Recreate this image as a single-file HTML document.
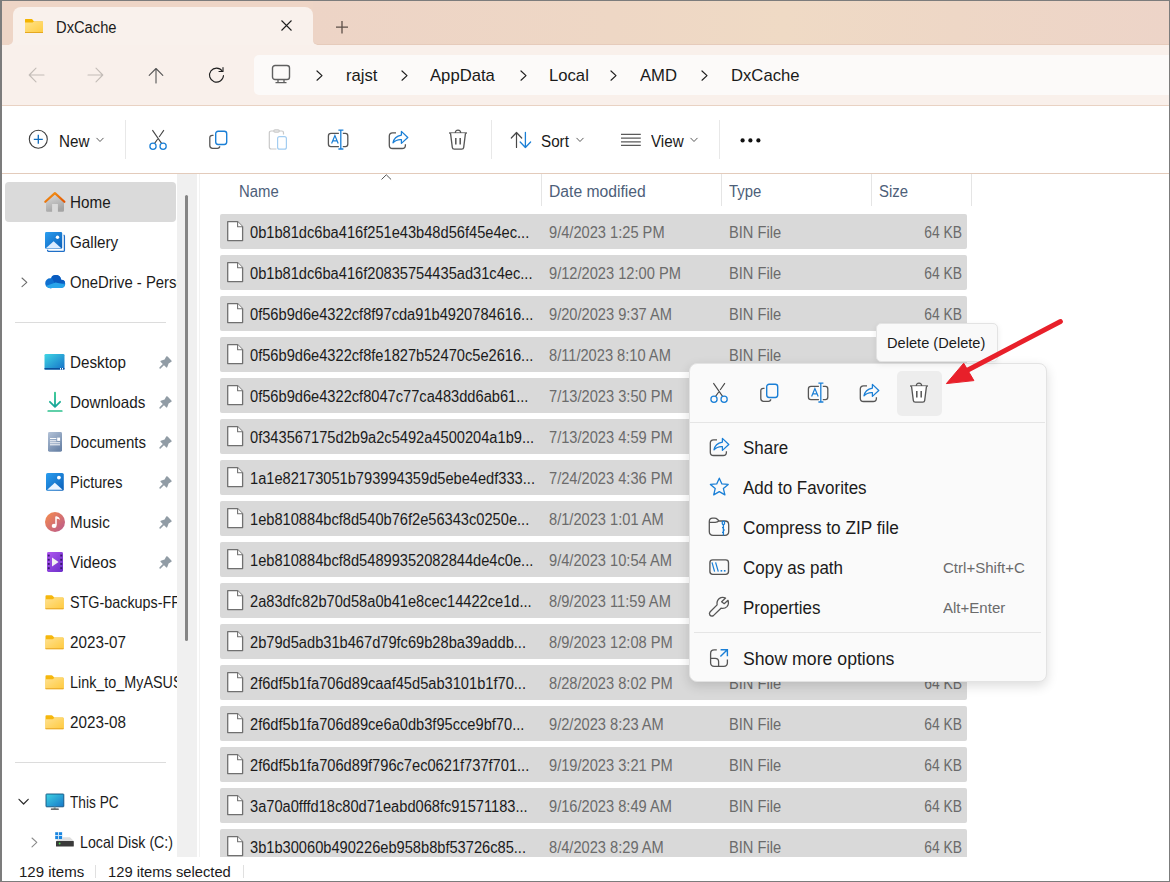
<!DOCTYPE html>
<html><head><meta charset="utf-8">
<style>
*{margin:0;padding:0;box-sizing:border-box}
html,body{width:1170px;height:882px;overflow:hidden;background:#fff}
body{position:relative;font-family:"Liberation Sans",sans-serif;color:#1a1a1a}
.a{position:absolute}
.t{position:absolute;white-space:nowrap;line-height:1;transform-origin:0 0}
svg{position:absolute;overflow:visible}
.row{left:220px;width:747px;background:#d9d9d9;border-radius:2px}
.fn{font-size:16px;color:#1b1b1b;transform:scaleX(0.915)}
.gr{font-size:16px;color:#6b6b6b;transform:scaleX(0.915)}
.grr{font-size:16px;color:#6b6b6b;transform:scaleX(0.865);transform-origin:100% 0}
.nav{font-size:16.5px;color:#1b1b1b;transform:scaleX(0.923)}
.hd{font-size:16px;color:#4d6079;transform:scaleX(0.93)}
.cm{font-size:17.5px;color:#1b1b1b;transform:scaleX(0.97)}
.ic{fill:none;stroke-linecap:round;stroke-linejoin:round}
</style></head><body>
<!-- ============ TAB BAR ============ -->
<div class="a" style="left:0;top:0;width:1170px;height:50px;background:#f9f0eb"></div>
<div class="a" style="left:0;top:0;width:1170px;height:45px;background:#eed5c6;border-radius:0 0 0 0"></div>
<div class="a" style="left:9px;top:30px;width:308px;height:16px;background:#f9f1ec"></div>
<div class="a" style="left:0;top:0;width:13px;height:45px;background:#eed5c6;border-radius:0 0 5px 0"></div>
<div class="a" style="left:313px;top:0;width:857px;height:45px;background:linear-gradient(90deg,#edd4c6 0%,#eed7c5 35%,#efdac5 55%,#eed7c6 75%,#edd4c8 100%);border-radius:0 0 0 5px;border-bottom:1px solid #e6cbbb"></div>
<div class="a" style="left:13px;top:7px;width:300px;height:39px;background:#f9f1ec;border-radius:8px 8px 0 0"></div>
<svg width="20" height="16" style="left:24px;top:18px" viewBox="0 0 20 16">
 <defs><linearGradient id="fg" x1="0" y1="0" x2="1" y2="1"><stop offset="0" stop-color="#ffe28a"/><stop offset="1" stop-color="#ffcc40"/></linearGradient></defs>
 <path d="M1.5 1 H8 L10 3.5 H18.5 Q19 3.5 19 4 V14.5 H1 V1.5 Q1 1 1.5 1Z" fill="#f4b400"/>
 <path d="M1 4.5 H8.5 L10 3.5 H19 V14.5 Q19 15 18.5 15 H1.5 Q1 15 1 14.5Z" fill="url(#fg)"/>
 <rect x="1" y="14" width="18" height="1" fill="#e5a820"/>
</svg>
<div class="t" style="left:56px;top:20px;font-size:16px;color:#1b1b1b;transform:scaleX(0.92)">DxCache</div>
<svg width="12" height="12" style="left:281px;top:20px" viewBox="0 0 12 12"><path d="M0.5 0.5 L10.5 10.5 M10.5 0.5 L0.5 10.5" stroke="#1f1f1f" stroke-width="1.1"/></svg>
<svg width="13" height="13" style="left:336px;top:21px" viewBox="0 0 13 13"><path d="M6 0 V12.5 M0 6.2 H12" stroke="#5c4f48" stroke-width="1.3"/></svg>

<!-- ============ NAV BAR ============ -->
<div class="a" style="left:0;top:45px;width:1170px;height:61px;background:#f9f0eb;border-bottom:1px solid #e9d2c3"></div>
<svg width="16" height="16" style="left:28px;top:67px" viewBox="0 0 16 16"><path class="ic" d="M1.5 8 H16 M8 1.2 L1.2 8 L8 14.8" stroke="#c3bcb7" stroke-width="1.1"/></svg>
<svg width="16" height="16" style="left:88px;top:67px" viewBox="0 0 16 16"><path class="ic" d="M0 8 H14.5 M8 1.2 L14.8 8 L8 14.8" stroke="#c3bcb7" stroke-width="1.1"/></svg>
<svg width="16" height="16" style="left:148px;top:67px" viewBox="0 0 16 16"><path class="ic" d="M8 1.5 V16 M1.2 8.3 L8 1.5 L14.8 8.3" stroke="#555" stroke-width="1.1"/></svg>
<svg width="17" height="17" style="left:208px;top:66px" viewBox="0 0 17 17"><path class="ic" d="M14.2 5 A7 7 0 1 0 15.5 9.5" stroke="#1f1f1f" stroke-width="1.1"/><path class="ic" d="M15 1.5 V5.5 H11" stroke="#1f1f1f" stroke-width="1.1"/></svg>
<div class="a" style="left:254px;top:55px;width:930px;height:40px;background:#fcfaf9;border-radius:5px"></div>
<svg width="20" height="20" style="left:271px;top:64px" viewBox="0 0 20 20"><rect x="1.5" y="1.5" width="17" height="14" rx="2.6" fill="none" stroke="#5f5f5f" stroke-width="1.4"/><path d="M7 15.5 V18 M13 15.5 V18 M4.5 18.6 H15.5" stroke="#5f5f5f" stroke-width="1.3" fill="none"/></svg>
<svg width="8" height="12" style="left:316px;top:70px" viewBox="0 0 8 12"><path class="ic" d="M1 1 L6 5.6 L1 10.2" stroke="#1f1f1f" stroke-width="1.2"/></svg>
<div class="t" style="left:346px;top:67px;font-size:17px;transform:scaleX(0.98)">rajst</div>
<svg width="8" height="12" style="left:401px;top:70px" viewBox="0 0 8 12"><path class="ic" d="M1 1 L6 5.6 L1 10.2" stroke="#1f1f1f" stroke-width="1.2"/></svg>
<div class="t" style="left:430px;top:67px;font-size:17px;transform:scaleX(0.98)">AppData</div>
<svg width="8" height="12" style="left:520px;top:70px" viewBox="0 0 8 12"><path class="ic" d="M1 1 L6 5.6 L1 10.2" stroke="#1f1f1f" stroke-width="1.2"/></svg>
<div class="t" style="left:549px;top:67px;font-size:17px;transform:scaleX(0.98)">Local</div>
<svg width="8" height="12" style="left:610px;top:70px" viewBox="0 0 8 12"><path class="ic" d="M1 1 L6 5.6 L1 10.2" stroke="#1f1f1f" stroke-width="1.2"/></svg>
<div class="t" style="left:640px;top:67px;font-size:17px;transform:scaleX(0.98)">AMD</div>
<svg width="8" height="12" style="left:701px;top:70px" viewBox="0 0 8 12"><path class="ic" d="M1 1 L6 5.6 L1 10.2" stroke="#1f1f1f" stroke-width="1.2"/></svg>
<div class="t" style="left:731px;top:67px;font-size:17px;transform:scaleX(0.98)">DxCache</div>

<!-- ============ RIBBON ============ -->
<div class="a" style="left:0;top:106px;width:1170px;height:68px;background:#fff;border-bottom:1px solid #e3cbbb"></div>
<svg width="20" height="20" style="left:28px;top:129px" viewBox="0 0 20 20"><circle cx="10.3" cy="10.3" r="9" fill="none" stroke="#3d3d3d" stroke-width="1.1"/><path d="M10.3 5.8 V14.8 M5.8 10.3 H14.8" stroke="#0f6cbd" stroke-width="1.3"/></svg>
<div class="t" style="left:59px;top:134px;font-size:16px;transform:scaleX(0.95)">New</div>
<svg width="9" height="6" style="left:96px;top:137px" viewBox="0 0 9 6"><path class="ic" d="M0.8 1.2 L4 4.5 L7.2 1.2" stroke="#5a5a5a" stroke-width="1"/></svg>
<div class="a" style="left:125px;top:120px;width:1px;height:39px;background:#e8e8e8"></div>
<!-- cut -->
<svg id="cut" width="20" height="22" style="left:148px;top:129px" viewBox="0 0 20 22">
 <path d="M4.4 1.1 L13.6 14.4 M15.9 1.1 L11.1 8 M9.7 10 L6.6 14.4" stroke="#474747" stroke-width="1.1" fill="none"/>
 <circle cx="5" cy="17.3" r="3.1" fill="none" stroke="#1a7fd6" stroke-width="1.25"/><circle cx="15.1" cy="17.3" r="3.1" fill="none" stroke="#1a7fd6" stroke-width="1.25"/>
</svg>
<!-- copy -->
<svg width="20" height="20" style="left:209px;top:130px" viewBox="0 0 20 20">
 <path d="M4.5 5.3 H3.3 Q0.8 5.3 0.8 7.8 V15.5 Q0.8 18.3 3.6 18.3 H8.4 Q10.7 18.3 10.7 16.2" fill="none" stroke="#555" stroke-width="1.3"/>
 <rect x="6.7" y="1.3" width="11" height="13.2" rx="2.4" fill="none" stroke="#1a7fd6" stroke-width="1.4"/>
</svg>
<!-- paste disabled -->
<svg width="20" height="21" style="left:268px;top:129px" viewBox="0 0 20 21">
 <path d="M8.5 20 H3.3 Q1.3 20 1.3 18 V3.8 Q1.3 2 3.3 2 H13.8 Q15.5 2 15.5 3.8 V5.5" fill="none" stroke="#c9c9c9" stroke-width="1.2"/>
 <rect x="5.8" y="0.8" width="5.5" height="2.4" rx="1.2" fill="none" stroke="#c9c9c9" stroke-width="1.1"/>
 <rect x="9.6" y="7.6" width="8.8" height="12.6" rx="2" fill="none" stroke="#a3cdf1" stroke-width="1.2"/>
</svg>
<!-- rename -->
<svg width="22" height="21" style="left:327px;top:129px" viewBox="0 0 22 21">
 <path d="M11.9 4.4 H4 Q1.4 4.4 1.4 7 V15 Q1.4 17.6 4 17.6 H11.9 M15.8 4.4 H18.4 Q20.8 4.4 20.8 7 V15 Q20.8 17.6 18.4 17.6 H15.8" fill="none" stroke="#555" stroke-width="1.3"/>
 <path d="M13.8 1.2 V20 M11.4 1.2 H16.4 M11.4 20 H16.4" stroke="#1a7fd6" stroke-width="1.3" fill="none"/>
 <path d="M4.6 14.6 L7.9 6.6 L11.2 14.6 M5.8 11.8 H10" stroke="#1a7fd6" stroke-width="1.2" fill="none"/>
</svg>
<!-- share -->
<svg width="30" height="30" style="left:383px;top:125px" viewBox="0 0 30 30">
 <path d="M13 7.8 H9.6 Q6.3 7.8 6.3 11.1 V20.2 Q6.3 23.5 9.6 23.5 H19.1 Q22.4 23.5 22.4 20.2 V19.2" fill="none" stroke="#555" stroke-width="1.3"/>
 <path d="M10 17.9 Q11 11.4 18.4 10.1 V6.4 L24.8 12.5 L18.4 18.4 V14.6 Q13.2 14.2 10 17.9 Z" fill="none" stroke="#1a7fd6" stroke-width="1.25" stroke-linejoin="round"/>
</svg>
<!-- delete -->
<svg width="20" height="21" style="left:448px;top:129px" viewBox="0 0 20 21">
 <path d="M1 4 H19" stroke="#555" stroke-width="1.3"/>
 <path d="M7.3 4 Q7.3 1.1 10 1.1 Q12.7 1.1 12.7 4" fill="none" stroke="#555" stroke-width="1.2"/>
 <path d="M2.5 4.2 L4.3 18.4 Q4.5 20.2 6.3 20.2 H13.7 Q15.5 20.2 15.7 18.4 L17.5 4.2" fill="#fff" stroke="#555" stroke-width="1.3"/>
 <path d="M7.8 9 V15.5 M12.2 9 V15.5" stroke="#555" stroke-width="1.5"/>
</svg>
<div class="a" style="left:491px;top:120px;width:1px;height:39px;background:#e8e8e8"></div>
<!-- sort -->
<svg width="22" height="18" style="left:510px;top:131px" viewBox="0 0 22 18">
 <path class="ic" d="M6.5 1.5 V16.5 M1.3 7 L6.5 1.5 L11.7 7" stroke="#474747" stroke-width="1.2"/>
 <path class="ic" d="M15.4 1.5 V16.5 M10.2 11 L15.4 16.5 L20.6 11" stroke="#1a7fd6" stroke-width="1.3"/>
</svg>
<div class="t" style="left:541px;top:134px;font-size:16px;transform:scaleX(0.95)">Sort</div>
<svg width="9" height="6" style="left:576px;top:137px" viewBox="0 0 9 6"><path class="ic" d="M0.8 1.2 L4 4.5 L7.2 1.2" stroke="#5a5a5a" stroke-width="1"/></svg>
<!-- view -->
<svg width="22" height="14" style="left:620px;top:133px" viewBox="0 0 22 14">
 <path d="M1 1.4 H20.8 M1 5.1 H20.8 M1 8.8 H20.8 M1 12.4 H20.8" stroke="#5a5a5a" stroke-width="1.2"/>
</svg>
<div class="t" style="left:651px;top:134px;font-size:16px;transform:scaleX(0.95)">View</div>
<svg width="9" height="6" style="left:690px;top:137px" viewBox="0 0 9 6"><path class="ic" d="M0.8 1.2 L4 4.5 L7.2 1.2" stroke="#5a5a5a" stroke-width="1"/></svg>
<div class="a" style="left:719px;top:120px;width:1px;height:39px;background:#e8e8e8"></div>
<svg width="20" height="6" style="left:740px;top:137px" viewBox="0 0 20 6"><circle cx="2.6" cy="3.4" r="2.1" fill="#111"/><circle cx="10.4" cy="3.4" r="2.1" fill="#111"/><circle cx="18.4" cy="3.4" r="2.1" fill="#111"/></svg>

<!-- ============ NAV PANE ============ -->
<div class="a" style="left:177px;top:174px;width:20px;height:683px;background:#f0f0f0"></div>
<div class="a" style="left:185px;top:195px;width:3px;height:446px;background:#858585;border-radius:2px"></div>
<div class="a" style="left:199px;top:174px;width:1px;height:683px;background:#f2f2f2"></div>
<div class="a" style="left:5px;top:182px;width:171px;height:40px;background:#dadada;border-radius:4px"></div>
<div class="a" style="left:15px;top:322px;width:151px;height:1px;background:#dcdcdc"></div>
<div class="a" style="left:15px;top:762px;width:151px;height:1px;background:#dcdcdc"></div>
<svg width="0" height="0" style="left:0;top:0"><defs>
<linearGradient id="fgn" x1="0" y1="0" x2="1" y2="1"><stop offset="0" stop-color="#ffe190"/><stop offset="1" stop-color="#ffca3e"/></linearGradient>
<linearGradient id="hb" x1="0" y1="0" x2="0.4" y2="1"><stop offset="0" stop-color="#dcdcdc"/><stop offset="1" stop-color="#a4a4a4"/></linearGradient><linearGradient id="roof" x1="0" y1="0" x2="1" y2="1"><stop offset="0" stop-color="#f39a1a"/><stop offset="1" stop-color="#e35400"/></linearGradient>
<linearGradient id="dsk" x1="0" y1="0" x2="1" y2="1"><stop offset="0" stop-color="#40d6e4"/><stop offset="1" stop-color="#1470c8"/></linearGradient>
<linearGradient id="doc" x1="0" y1="0" x2="0.6" y2="1"><stop offset="0" stop-color="#b4c3d8"/><stop offset="1" stop-color="#6c85a8"/></linearGradient>
<linearGradient id="pic" x1="0" y1="0" x2="1" y2="1"><stop offset="0" stop-color="#2b9ef0"/><stop offset="1" stop-color="#0b5fb8"/></linearGradient>
<linearGradient id="mus" x1="0" y1="0" x2="1" y2="1"><stop offset="0" stop-color="#f78e4c"/><stop offset="1" stop-color="#b8578f"/></linearGradient>
<linearGradient id="vid" x1="0" y1="0" x2="1" y2="1"><stop offset="0" stop-color="#b058f0"/><stop offset="1" stop-color="#6a2ec8"/></linearGradient>
<linearGradient id="pc" x1="0" y1="0" x2="1" y2="1"><stop offset="0" stop-color="#3fd3e3"/><stop offset="1" stop-color="#1676c8"/></linearGradient>
<linearGradient id="od" x1="0" y1="0" x2="0" y2="1"><stop offset="0" stop-color="#0a63c9"/><stop offset="1" stop-color="#1d8fe8"/></linearGradient>
<linearGradient id="dl" x1="0" y1="0" x2="0" y2="15" gradientUnits="userSpaceOnUse"><stop offset="0" stop-color="#2cc78c"/><stop offset="1" stop-color="#16a39a"/></linearGradient>
</defs></svg>
<!-- home -->
<svg width="22" height="21" style="left:44px;top:192px" viewBox="0 0 22 21">
 <path d="M2 10 L10.9 2.5 L20 10 V18.5 Q20 19.7 18.8 19.7 H13.9 V11.9 H8.1 V19.7 H3.2 Q2 19.7 2 18.5 Z" fill="url(#hb)"/>
 <path d="M1.3 9.8 L10.9 1.1 L20.4 9.8" fill="none" stroke="url(#roof)" stroke-width="2.2" stroke-linecap="round" stroke-linejoin="round"/>
</svg>
<!-- gallery -->
<svg width="21" height="21" style="left:45px;top:232px" viewBox="0 0 21 21">
 <path d="M2.6 17.8 V18.6 Q2.6 19.4 3.4 19.4 H18.4 Q19.4 19.4 19.4 18.4 V4.2 Q19.4 3.4 18.6 3.2" fill="none" stroke="#1f6fc8" stroke-width="1.3"/>
 <rect x="0" y="0" width="17.2" height="17" rx="1.4" fill="url(#pic)"/>
 <path d="M0.6 16.6 L8.6 9.2 L16.6 16.6Z" fill="#dcecff"/>
 <circle cx="12.5" cy="5.2" r="1.7" fill="#fff"/>
</svg>
<!-- onedrive -->
<svg width="8" height="12" style="left:21px;top:277px" viewBox="0 0 8 12"><path class="ic" d="M1 1 L5.8 5.3 L1 9.6" stroke="#6b6b6b" stroke-width="1.1"/></svg>
<svg width="21" height="14" style="left:45px;top:275px" viewBox="0 0 21 14">
 <defs><clipPath id="cld"><circle cx="5.2" cy="8.3" r="5"/><circle cx="10.8" cy="5.5" r="5.4"/><circle cx="16.2" cy="8.8" r="4"/><rect x="4" y="8" width="12.5" height="5"/></clipPath></defs>
 <g clip-path="url(#cld)">
  <rect x="0" y="0" width="21" height="14" fill="#0f70d0"/>
  <path d="M6 0 H21 V7.2 L10 9 L7.5 4 Z" fill="#0a5bbf"/>
  <path d="M0 11.3 L10.6 7.4 L21 9.8 V14 H0Z" fill="#29a5ea"/>
 </g>
</svg>
<!-- desktop -->
<svg width="21" height="16" style="left:44px;top:354px" viewBox="0 0 21 16">
 <rect x="0.5" y="0" width="20" height="15.5" rx="1.3" fill="url(#dsk)"/>
 <rect x="0.5" y="14" width="20" height="1.6" fill="#0b4f9a"/>
 <rect x="16" y="14" width="1" height="1.6" fill="#fff"/><rect x="18" y="14" width="1" height="1.6" fill="#fff"/>
</svg>
<!-- downloads -->
<svg width="16" height="20" style="left:47px;top:392px" viewBox="0 0 16 20">
 <path d="M8 0.6 V14.6 M2.9 9.8 L8 14.9 L13.1 9.8" fill="none" stroke="url(#dl)" stroke-width="1.8" stroke-linecap="round" stroke-linejoin="round"/>
 <path d="M1.2 19 H14.8" stroke="#2bc08d" stroke-width="1.7" stroke-linecap="round"/>
</svg>
<!-- documents -->
<svg width="15" height="20" style="left:48px;top:432px" viewBox="0 0 15 20">
 <rect x="0" y="0" width="14" height="19.7" rx="1.4" fill="url(#doc)"/>
 <path d="M2 6.5 H8.3 M2 8.8 H8.3 M2 10.8 H12 M2 12.8 H12" stroke="#fff" stroke-width="0.95"/>
 <rect x="9.2" y="5.6" width="2.9" height="3.3" fill="#fff"/>
</svg>
<!-- pictures -->
<svg width="18" height="18" style="left:46px;top:473px" viewBox="0 0 18 18">
 <rect x="0" y="0" width="17.8" height="17.8" rx="1.6" fill="url(#pic)"/>
 <path d="M1.2 16.8 L8.8 9.8 L16.6 16.8Z" fill="#e9f3ff"/>
 <circle cx="12.9" cy="4.6" r="1.9" fill="#fff"/>
</svg>
<!-- music -->
<svg width="20" height="20" style="left:45px;top:512px" viewBox="0 0 20 20">
 <circle cx="10" cy="10" r="10" fill="url(#mus)"/>
 <path d="M11 4.4 V13.6" stroke="#fff" stroke-width="1.5"/>
 <path d="M11.2 4.2 Q14.8 4.8 14.8 7.9 Q13.4 6.6 11.2 6.9Z" fill="#fff"/>
 <ellipse cx="9.1" cy="13.9" rx="2.4" ry="2.1" fill="#fff"/>
</svg>
<!-- videos -->
<svg width="16" height="20" style="left:47px;top:552px" viewBox="0 0 16 20">
 <rect x="0" y="0" width="16" height="20" rx="1.4" fill="url(#vid)"/>
 <g fill="#3a1870"><rect x="0.8" y="2.6" width="1.9" height="1.9"/><rect x="0.8" y="6.8" width="1.9" height="1.9"/><rect x="0.8" y="11" width="1.9" height="1.9"/><rect x="0.8" y="15.2" width="1.9" height="1.9"/>
 <rect x="13.3" y="2.6" width="1.9" height="1.9"/><rect x="13.3" y="6.8" width="1.9" height="1.9"/><rect x="13.3" y="11" width="1.9" height="1.9"/><rect x="13.3" y="15.2" width="1.9" height="1.9"/></g>
 <path d="M5 5.6 L11.6 10 L5 14.4Z" fill="#f2f2f2"/>
</svg>
<svg width="14" height="14" style="left:159px;top:355px" viewBox="0 0 14 14"><path d="M7.2 1.6 Q7.9 0.9 8.6 1.6 L12.4 5.4 Q13.1 6.1 12.4 6.8 L9.6 8.4 L8.2 12.2 Q7.8 13 7.1 12.3 L1.7 6.9 Q1 6.2 1.8 5.8 L5.6 4.4 Z" fill="#919ca5"/><path d="M4.6 9.4 L1.1 12.9" stroke="#919ca5" stroke-width="1.5" stroke-linecap="round"/></svg><svg width="14" height="14" style="left:159px;top:395px" viewBox="0 0 14 14"><path d="M7.2 1.6 Q7.9 0.9 8.6 1.6 L12.4 5.4 Q13.1 6.1 12.4 6.8 L9.6 8.4 L8.2 12.2 Q7.8 13 7.1 12.3 L1.7 6.9 Q1 6.2 1.8 5.8 L5.6 4.4 Z" fill="#919ca5"/><path d="M4.6 9.4 L1.1 12.9" stroke="#919ca5" stroke-width="1.5" stroke-linecap="round"/></svg><svg width="14" height="14" style="left:159px;top:435px" viewBox="0 0 14 14"><path d="M7.2 1.6 Q7.9 0.9 8.6 1.6 L12.4 5.4 Q13.1 6.1 12.4 6.8 L9.6 8.4 L8.2 12.2 Q7.8 13 7.1 12.3 L1.7 6.9 Q1 6.2 1.8 5.8 L5.6 4.4 Z" fill="#919ca5"/><path d="M4.6 9.4 L1.1 12.9" stroke="#919ca5" stroke-width="1.5" stroke-linecap="round"/></svg><svg width="14" height="14" style="left:159px;top:475px" viewBox="0 0 14 14"><path d="M7.2 1.6 Q7.9 0.9 8.6 1.6 L12.4 5.4 Q13.1 6.1 12.4 6.8 L9.6 8.4 L8.2 12.2 Q7.8 13 7.1 12.3 L1.7 6.9 Q1 6.2 1.8 5.8 L5.6 4.4 Z" fill="#919ca5"/><path d="M4.6 9.4 L1.1 12.9" stroke="#919ca5" stroke-width="1.5" stroke-linecap="round"/></svg><svg width="14" height="14" style="left:159px;top:515px" viewBox="0 0 14 14"><path d="M7.2 1.6 Q7.9 0.9 8.6 1.6 L12.4 5.4 Q13.1 6.1 12.4 6.8 L9.6 8.4 L8.2 12.2 Q7.8 13 7.1 12.3 L1.7 6.9 Q1 6.2 1.8 5.8 L5.6 4.4 Z" fill="#919ca5"/><path d="M4.6 9.4 L1.1 12.9" stroke="#919ca5" stroke-width="1.5" stroke-linecap="round"/></svg><svg width="14" height="14" style="left:159px;top:555px" viewBox="0 0 14 14"><path d="M7.2 1.6 Q7.9 0.9 8.6 1.6 L12.4 5.4 Q13.1 6.1 12.4 6.8 L9.6 8.4 L8.2 12.2 Q7.8 13 7.1 12.3 L1.7 6.9 Q1 6.2 1.8 5.8 L5.6 4.4 Z" fill="#919ca5"/><path d="M4.6 9.4 L1.1 12.9" stroke="#919ca5" stroke-width="1.5" stroke-linecap="round"/></svg><svg width="19" height="15" style="left:45px;top:595px" viewBox="0 0 19 15">
 <path d="M0.5 1.2 Q0.5 0.3 1.4 0.3 H6.6 Q7.2 0.3 7.6 0.8 L9.2 2.6 H18 Q18.6 2.6 18.6 3.2 V13.8 H0.5Z" fill="#f5b70d"/>
 <path d="M0.5 4.3 H7.6 L9.4 2.9 H18.6 V13.6 Q18.6 14.2 18 14.2 H1.1 Q0.5 14.2 0.5 13.6Z" fill="url(#fgn)"/>
 <rect x="0.5" y="13.2" width="18.1" height="1" fill="#e9a92a"/>
</svg><svg width="19" height="15" style="left:45px;top:635px" viewBox="0 0 19 15">
 <path d="M0.5 1.2 Q0.5 0.3 1.4 0.3 H6.6 Q7.2 0.3 7.6 0.8 L9.2 2.6 H18 Q18.6 2.6 18.6 3.2 V13.8 H0.5Z" fill="#f5b70d"/>
 <path d="M0.5 4.3 H7.6 L9.4 2.9 H18.6 V13.6 Q18.6 14.2 18 14.2 H1.1 Q0.5 14.2 0.5 13.6Z" fill="url(#fgn)"/>
 <rect x="0.5" y="13.2" width="18.1" height="1" fill="#e9a92a"/>
</svg><svg width="19" height="15" style="left:45px;top:675px" viewBox="0 0 19 15">
 <path d="M0.5 1.2 Q0.5 0.3 1.4 0.3 H6.6 Q7.2 0.3 7.6 0.8 L9.2 2.6 H18 Q18.6 2.6 18.6 3.2 V13.8 H0.5Z" fill="#f5b70d"/>
 <path d="M0.5 4.3 H7.6 L9.4 2.9 H18.6 V13.6 Q18.6 14.2 18 14.2 H1.1 Q0.5 14.2 0.5 13.6Z" fill="url(#fgn)"/>
 <rect x="0.5" y="13.2" width="18.1" height="1" fill="#e9a92a"/>
</svg><svg width="19" height="15" style="left:45px;top:715px" viewBox="0 0 19 15">
 <path d="M0.5 1.2 Q0.5 0.3 1.4 0.3 H6.6 Q7.2 0.3 7.6 0.8 L9.2 2.6 H18 Q18.6 2.6 18.6 3.2 V13.8 H0.5Z" fill="#f5b70d"/>
 <path d="M0.5 4.3 H7.6 L9.4 2.9 H18.6 V13.6 Q18.6 14.2 18 14.2 H1.1 Q0.5 14.2 0.5 13.6Z" fill="url(#fgn)"/>
 <rect x="0.5" y="13.2" width="18.1" height="1" fill="#e9a92a"/>
</svg>
<svg width="12" height="8" style="left:18px;top:798px" viewBox="0 0 12 8"><path class="ic" d="M1 1.3 L5.6 6 L10.2 1.3" stroke="#2b2b2b" stroke-width="1.2"/></svg>
<svg width="19" height="17" style="left:45px;top:793px" viewBox="0 0 19 17">
 <rect x="1" y="1" width="17.8" height="12.8" rx="0.6" fill="url(#pc)" stroke="#11507e" stroke-width="0.9"/>
 <rect x="8.7" y="13.8" width="2" height="2" fill="#8aa"/>
 <rect x="5.8" y="15.6" width="8" height="1.2" rx="0.5" fill="#3c3c3c"/>
</svg>
<svg width="8" height="12" style="left:31px;top:837px" viewBox="0 0 8 12"><path class="ic" d="M1 1 L5.8 5.4 L1 9.8" stroke="#8a8a8a" stroke-width="1.1"/></svg>
<svg width="20" height="16" style="left:55px;top:831px" viewBox="0 0 20 16">
 <path d="M1.5 10 L3 6.3 H15 L18.8 10Z" fill="#dedede"/>
 <rect x="1" y="10" width="17.8" height="5.5" rx="0.6" fill="#3a3a3a"/>
 <circle cx="4.6" cy="12.5" r="0.9" fill="#4ee04e"/>
 <g fill="#1a86e0" stroke="#fff" stroke-width="0.4"><rect x="0" y="1" width="3.4" height="3.4"/><rect x="3.8" y="1" width="3.4" height="3.4"/><rect x="0" y="4.8" width="3.4" height="3.4"/><rect x="3.8" y="4.8" width="3.4" height="3.4"/></g>
</svg>

<div class="a" style="left:2px;top:174px;width:175px;height:683px;overflow:hidden">
<div class="t nav" style="left:68px;top:20px">Home</div><div class="t nav" style="left:68px;top:60px">Gallery</div><div class="t nav" style="left:68px;top:100px;transform:scaleX(0.9)">OneDrive - Personal</div><div class="t nav" style="left:68px;top:180px">Desktop</div><div class="t nav" style="left:68px;top:220px">Downloads</div><div class="t nav" style="left:68px;top:260px;transform:scaleX(0.91)">Documents</div><div class="t nav" style="left:68px;top:300px;transform:scaleX(0.88)">Pictures</div><div class="t nav" style="left:68px;top:340px">Music</div><div class="t nav" style="left:68px;top:380px">Videos</div><div class="t nav" style="left:68px;top:420px;transform:scaleX(0.87)">STG-backups-FF</div><div class="t nav" style="left:68px;top:460px">2023-07</div><div class="t nav" style="left:68px;top:500px;transform:scaleX(0.87)">Link_to_MyASUS</div><div class="t nav" style="left:68px;top:540px">2023-08</div><div class="t nav" style="left:68px;top:620px;transform:scaleX(0.83)">This PC</div><div class="t nav" style="left:78px;top:660px;transform:scaleX(0.86)">Local Disk (C:)</div>
</div>

<!-- ============ HEADER ============ -->
<div class="t hd" style="left:239px;top:184px">Name</div>
<div class="t hd" style="left:549px;top:184px;transform:scaleX(0.98)">Date modified</div>
<div class="t hd" style="left:729px;top:184px">Type</div>
<div class="t hd" style="left:879px;top:184px">Size</div>
<svg width="11" height="6" style="left:381px;top:174px" viewBox="0 0 11 6"><path class="ic" d="M0.8 5.2 L5.3 0.8 L9.8 5.2" stroke="#555" stroke-width="1"/></svg>
<div class="a" style="left:541px;top:174px;width:1px;height:32px;background:#e5e5e5"></div>
<div class="a" style="left:721px;top:174px;width:1px;height:32px;background:#e5e5e5"></div>
<div class="a" style="left:871px;top:174px;width:1px;height:32px;background:#e5e5e5"></div>
<div class="a" style="left:971px;top:174px;width:1px;height:32px;background:#e5e5e5"></div>
<div class="a" style="left:200px;top:174px;width:970px;height:683px;overflow:hidden">
<div class="a" style="left:-200px;top:-174px;width:1170px;height:882px">
<div class="a row" style="top:214px;height:35px"></div><svg width="17" height="21" viewBox="0 0 17 21" style="left:227px;top:221px"><path d="M0.7 0.7 H10.6 L15.6 5.7 V19.6 H0.7 Z" fill="#fff" stroke="#707070" stroke-width="1.3" stroke-linejoin="round"/><path d="M10.6 0.7 V5.7 H15.6" fill="#fff" stroke="#707070" stroke-width="1.1" stroke-linejoin="round"/></svg><div class="t fn" style="left:250px;top:225px">0b1b81dc6ba416f251e43b48d56f45e4ec...</div><div class="t gr" style="left:549px;top:225px">9/4/2023 1:25 PM</div><div class="t gr" style="left:729px;top:225px">BIN File</div><div class="t grr" style="left:912px;top:225px;width:50px;text-align:right">64 KB</div><div class="a row" style="top:255px;height:35px"></div><svg width="17" height="21" viewBox="0 0 17 21" style="left:227px;top:262px"><path d="M0.7 0.7 H10.6 L15.6 5.7 V19.6 H0.7 Z" fill="#fff" stroke="#707070" stroke-width="1.3" stroke-linejoin="round"/><path d="M10.6 0.7 V5.7 H15.6" fill="#fff" stroke="#707070" stroke-width="1.1" stroke-linejoin="round"/></svg><div class="t fn" style="left:250px;top:266px">0b1b81dc6ba416f20835754435ad31c4ec...</div><div class="t gr" style="left:549px;top:266px">9/12/2023 12:00 PM</div><div class="t gr" style="left:729px;top:266px">BIN File</div><div class="t grr" style="left:912px;top:266px;width:50px;text-align:right">64 KB</div><div class="a row" style="top:296px;height:35px"></div><svg width="17" height="21" viewBox="0 0 17 21" style="left:227px;top:303px"><path d="M0.7 0.7 H10.6 L15.6 5.7 V19.6 H0.7 Z" fill="#fff" stroke="#707070" stroke-width="1.3" stroke-linejoin="round"/><path d="M10.6 0.7 V5.7 H15.6" fill="#fff" stroke="#707070" stroke-width="1.1" stroke-linejoin="round"/></svg><div class="t fn" style="left:250px;top:307px">0f56b9d6e4322cf8f97cda91b4920784616...</div><div class="t gr" style="left:549px;top:307px">9/20/2023 9:37 AM</div><div class="t gr" style="left:729px;top:307px">BIN File</div><div class="t grr" style="left:912px;top:307px;width:50px;text-align:right">64 KB</div><div class="a row" style="top:337px;height:35px"></div><svg width="17" height="21" viewBox="0 0 17 21" style="left:227px;top:344px"><path d="M0.7 0.7 H10.6 L15.6 5.7 V19.6 H0.7 Z" fill="#fff" stroke="#707070" stroke-width="1.3" stroke-linejoin="round"/><path d="M10.6 0.7 V5.7 H15.6" fill="#fff" stroke="#707070" stroke-width="1.1" stroke-linejoin="round"/></svg><div class="t fn" style="left:250px;top:348px">0f56b9d6e4322cf8fe1827b52470c5e2616...</div><div class="t gr" style="left:549px;top:348px">8/11/2023 8:10 AM</div><div class="t gr" style="left:729px;top:348px">BIN File</div><div class="t grr" style="left:912px;top:348px;width:50px;text-align:right">64 KB</div><div class="a row" style="top:378px;height:35px"></div><svg width="17" height="21" viewBox="0 0 17 21" style="left:227px;top:385px"><path d="M0.7 0.7 H10.6 L15.6 5.7 V19.6 H0.7 Z" fill="#fff" stroke="#707070" stroke-width="1.3" stroke-linejoin="round"/><path d="M10.6 0.7 V5.7 H15.6" fill="#fff" stroke="#707070" stroke-width="1.1" stroke-linejoin="round"/></svg><div class="t fn" style="left:250px;top:389px">0f56b9d6e4322cf8047c77ca483dd6ab61...</div><div class="t gr" style="left:549px;top:389px">7/13/2023 3:50 PM</div><div class="t gr" style="left:729px;top:389px">BIN File</div><div class="t grr" style="left:912px;top:389px;width:50px;text-align:right">64 KB</div><div class="a row" style="top:419px;height:35px"></div><svg width="17" height="21" viewBox="0 0 17 21" style="left:227px;top:426px"><path d="M0.7 0.7 H10.6 L15.6 5.7 V19.6 H0.7 Z" fill="#fff" stroke="#707070" stroke-width="1.3" stroke-linejoin="round"/><path d="M10.6 0.7 V5.7 H15.6" fill="#fff" stroke="#707070" stroke-width="1.1" stroke-linejoin="round"/></svg><div class="t fn" style="left:250px;top:430px">0f343567175d2b9a2c5492a4500204a1b9...</div><div class="t gr" style="left:549px;top:430px">7/13/2023 4:59 PM</div><div class="t gr" style="left:729px;top:430px">BIN File</div><div class="t grr" style="left:912px;top:430px;width:50px;text-align:right">64 KB</div><div class="a row" style="top:460px;height:35px"></div><svg width="17" height="21" viewBox="0 0 17 21" style="left:227px;top:467px"><path d="M0.7 0.7 H10.6 L15.6 5.7 V19.6 H0.7 Z" fill="#fff" stroke="#707070" stroke-width="1.3" stroke-linejoin="round"/><path d="M10.6 0.7 V5.7 H15.6" fill="#fff" stroke="#707070" stroke-width="1.1" stroke-linejoin="round"/></svg><div class="t fn" style="left:250px;top:471px">1a1e82173051b793994359d5ebe4edf333...</div><div class="t gr" style="left:549px;top:471px">7/24/2023 4:36 PM</div><div class="t gr" style="left:729px;top:471px">BIN File</div><div class="t grr" style="left:912px;top:471px;width:50px;text-align:right">64 KB</div><div class="a row" style="top:501px;height:35px"></div><svg width="17" height="21" viewBox="0 0 17 21" style="left:227px;top:508px"><path d="M0.7 0.7 H10.6 L15.6 5.7 V19.6 H0.7 Z" fill="#fff" stroke="#707070" stroke-width="1.3" stroke-linejoin="round"/><path d="M10.6 0.7 V5.7 H15.6" fill="#fff" stroke="#707070" stroke-width="1.1" stroke-linejoin="round"/></svg><div class="t fn" style="left:250px;top:512px">1eb810884bcf8d540b76f2e56343c0250e...</div><div class="t gr" style="left:549px;top:512px">8/1/2023 1:01 AM</div><div class="t gr" style="left:729px;top:512px">BIN File</div><div class="t grr" style="left:912px;top:512px;width:50px;text-align:right">64 KB</div><div class="a row" style="top:542px;height:35px"></div><svg width="17" height="21" viewBox="0 0 17 21" style="left:227px;top:549px"><path d="M0.7 0.7 H10.6 L15.6 5.7 V19.6 H0.7 Z" fill="#fff" stroke="#707070" stroke-width="1.3" stroke-linejoin="round"/><path d="M10.6 0.7 V5.7 H15.6" fill="#fff" stroke="#707070" stroke-width="1.1" stroke-linejoin="round"/></svg><div class="t fn" style="left:250px;top:553px">1eb810884bcf8d54899352082844de4c0e...</div><div class="t gr" style="left:549px;top:553px">9/4/2023 10:54 AM</div><div class="t gr" style="left:729px;top:553px">BIN File</div><div class="t grr" style="left:912px;top:553px;width:50px;text-align:right">64 KB</div><div class="a row" style="top:583px;height:35px"></div><svg width="17" height="21" viewBox="0 0 17 21" style="left:227px;top:590px"><path d="M0.7 0.7 H10.6 L15.6 5.7 V19.6 H0.7 Z" fill="#fff" stroke="#707070" stroke-width="1.3" stroke-linejoin="round"/><path d="M10.6 0.7 V5.7 H15.6" fill="#fff" stroke="#707070" stroke-width="1.1" stroke-linejoin="round"/></svg><div class="t fn" style="left:250px;top:594px">2a83dfc82b70d58a0b41e8cec14422ce1d...</div><div class="t gr" style="left:549px;top:594px">8/9/2023 11:59 AM</div><div class="t gr" style="left:729px;top:594px">BIN File</div><div class="t grr" style="left:912px;top:594px;width:50px;text-align:right">64 KB</div><div class="a row" style="top:624px;height:35px"></div><svg width="17" height="21" viewBox="0 0 17 21" style="left:227px;top:631px"><path d="M0.7 0.7 H10.6 L15.6 5.7 V19.6 H0.7 Z" fill="#fff" stroke="#707070" stroke-width="1.3" stroke-linejoin="round"/><path d="M10.6 0.7 V5.7 H15.6" fill="#fff" stroke="#707070" stroke-width="1.1" stroke-linejoin="round"/></svg><div class="t fn" style="left:250px;top:635px">2b79d5adb31b467d79fc69b28ba39addb...</div><div class="t gr" style="left:549px;top:635px">8/9/2023 12:08 PM</div><div class="t gr" style="left:729px;top:635px">BIN File</div><div class="t grr" style="left:912px;top:635px;width:50px;text-align:right">64 KB</div><div class="a row" style="top:665px;height:35px"></div><svg width="17" height="21" viewBox="0 0 17 21" style="left:227px;top:672px"><path d="M0.7 0.7 H10.6 L15.6 5.7 V19.6 H0.7 Z" fill="#fff" stroke="#707070" stroke-width="1.3" stroke-linejoin="round"/><path d="M10.6 0.7 V5.7 H15.6" fill="#fff" stroke="#707070" stroke-width="1.1" stroke-linejoin="round"/></svg><div class="t fn" style="left:250px;top:676px">2f6df5b1fa706d89caaf45d5ab3101b1f70...</div><div class="t gr" style="left:549px;top:676px">8/28/2023 8:02 PM</div><div class="t gr" style="left:729px;top:676px">BIN File</div><div class="t grr" style="left:912px;top:676px;width:50px;text-align:right">64 KB</div><div class="a row" style="top:706px;height:35px"></div><svg width="17" height="21" viewBox="0 0 17 21" style="left:227px;top:713px"><path d="M0.7 0.7 H10.6 L15.6 5.7 V19.6 H0.7 Z" fill="#fff" stroke="#707070" stroke-width="1.3" stroke-linejoin="round"/><path d="M10.6 0.7 V5.7 H15.6" fill="#fff" stroke="#707070" stroke-width="1.1" stroke-linejoin="round"/></svg><div class="t fn" style="left:250px;top:717px">2f6df5b1fa706d89ce6a0db3f95cce9bf70...</div><div class="t gr" style="left:549px;top:717px">9/2/2023 8:23 AM</div><div class="t gr" style="left:729px;top:717px">BIN File</div><div class="t grr" style="left:912px;top:717px;width:50px;text-align:right">64 KB</div><div class="a row" style="top:747px;height:35px"></div><svg width="17" height="21" viewBox="0 0 17 21" style="left:227px;top:754px"><path d="M0.7 0.7 H10.6 L15.6 5.7 V19.6 H0.7 Z" fill="#fff" stroke="#707070" stroke-width="1.3" stroke-linejoin="round"/><path d="M10.6 0.7 V5.7 H15.6" fill="#fff" stroke="#707070" stroke-width="1.1" stroke-linejoin="round"/></svg><div class="t fn" style="left:250px;top:758px">2f6df5b1fa706d89f796c7ec0621f737f701...</div><div class="t gr" style="left:549px;top:758px">9/19/2023 3:21 PM</div><div class="t gr" style="left:729px;top:758px">BIN File</div><div class="t grr" style="left:912px;top:758px;width:50px;text-align:right">64 KB</div><div class="a row" style="top:788px;height:35px"></div><svg width="17" height="21" viewBox="0 0 17 21" style="left:227px;top:795px"><path d="M0.7 0.7 H10.6 L15.6 5.7 V19.6 H0.7 Z" fill="#fff" stroke="#707070" stroke-width="1.3" stroke-linejoin="round"/><path d="M10.6 0.7 V5.7 H15.6" fill="#fff" stroke="#707070" stroke-width="1.1" stroke-linejoin="round"/></svg><div class="t fn" style="left:250px;top:799px">3a70a0fffd18c80d71eabd068fc91571183...</div><div class="t gr" style="left:549px;top:799px">9/16/2023 8:49 AM</div><div class="t gr" style="left:729px;top:799px">BIN File</div><div class="t grr" style="left:912px;top:799px;width:50px;text-align:right">64 KB</div><div class="a row" style="top:829px;height:35px"></div><svg width="17" height="21" viewBox="0 0 17 21" style="left:227px;top:836px"><path d="M0.7 0.7 H10.6 L15.6 5.7 V19.6 H0.7 Z" fill="#fff" stroke="#707070" stroke-width="1.3" stroke-linejoin="round"/><path d="M10.6 0.7 V5.7 H15.6" fill="#fff" stroke="#707070" stroke-width="1.1" stroke-linejoin="round"/></svg><div class="t fn" style="left:250px;top:840px">3b1b30060b490226eb958b8bf53726c85...</div><div class="t gr" style="left:549px;top:840px">8/4/2023 8:29 AM</div><div class="t gr" style="left:729px;top:840px">BIN File</div><div class="t grr" style="left:912px;top:840px;width:50px;text-align:right">64 KB</div>
</div></div>

<!-- ============ STATUS BAR ============ -->
<div class="t" style="left:19px;top:864px;font-size:15.5px;color:#1b1b1b;transform:scaleX(0.97)">129 items</div>
<div class="a" style="left:95px;top:865px;width:1px;height:13px;background:#e0e0e0"></div>
<div class="t" style="left:108px;top:864px;font-size:15.5px;color:#1b1b1b;transform:scaleX(0.95)">129 items selected</div>
<div class="a" style="left:243px;top:865px;width:1px;height:13px;background:#e0e0e0"></div>

<!-- ============ CONTEXT MENU ============ -->
<div class="a" style="left:689px;top:363px;width:358px;height:319px;background:#fafafa;border:1px solid #e3e3e3;border-radius:8px;box-shadow:0 4px 12px rgba(0,0,0,0.14)"></div>
<div class="a" style="left:897px;top:371px;width:45px;height:45px;background:#ededed;border-radius:5px"></div>
<div class="a" style="left:690px;top:422px;width:355px;height:1px;background:#e5e5e5"></div>
<div class="a" style="left:694px;top:632px;width:347px;height:1px;background:#e5e5e5"></div>

<!-- cut -->
<svg width="20" height="22" style="left:709px;top:382px" viewBox="0 0 20 22">
 <path d="M4.4 1.1 L13.6 14.4 M15.9 1.1 L11.1 8 M9.7 10 L6.6 14.4" stroke="#474747" stroke-width="1.1" fill="none"/>
 <circle cx="5" cy="17.3" r="3.1" fill="none" stroke="#1a7fd6" stroke-width="1.25"/><circle cx="15.1" cy="17.3" r="3.1" fill="none" stroke="#1a7fd6" stroke-width="1.25"/>
</svg>
<svg width="20" height="20" style="left:760px;top:383px" viewBox="0 0 20 20">
 <path d="M4.5 5.3 H3.3 Q0.8 5.3 0.8 7.8 V15.5 Q0.8 18.3 3.6 18.3 H8.4 Q10.7 18.3 10.7 16.2" fill="none" stroke="#555" stroke-width="1.3"/>
 <rect x="6.7" y="1.3" width="11" height="13.2" rx="2.4" fill="none" stroke="#1a7fd6" stroke-width="1.4"/>
</svg>
<svg width="22" height="21" style="left:807px;top:382px" viewBox="0 0 22 21">
 <path d="M11.9 4.4 H4 Q1.4 4.4 1.4 7 V15 Q1.4 17.6 4 17.6 H11.9 M15.8 4.4 H18.4 Q20.8 4.4 20.8 7 V15 Q20.8 17.6 18.4 17.6 H15.8" fill="none" stroke="#555" stroke-width="1.3"/>
 <path d="M13.8 1.2 V20 M11.4 1.2 H16.4 M11.4 20 H16.4" stroke="#1a7fd6" stroke-width="1.3" fill="none"/>
 <path d="M4.6 14.6 L7.9 6.6 L11.2 14.6 M5.8 11.8 H10" stroke="#1a7fd6" stroke-width="1.2" fill="none"/>
</svg>
<svg width="30" height="30" style="left:854px;top:378px" viewBox="0 0 30 30">
 <path d="M13 7.8 H9.6 Q6.3 7.8 6.3 11.1 V20.2 Q6.3 23.5 9.6 23.5 H19.1 Q22.4 23.5 22.4 20.2 V19.2" fill="none" stroke="#555" stroke-width="1.3"/>
 <path d="M10 17.9 Q11 11.4 18.4 10.1 V6.4 L24.8 12.5 L18.4 18.4 V14.6 Q13.2 14.2 10 17.9 Z" fill="none" stroke="#1a7fd6" stroke-width="1.25" stroke-linejoin="round"/>
</svg>
<svg width="20" height="21" style="left:909px;top:382px" viewBox="0 0 20 21">
 <path d="M1 4 H19" stroke="#555" stroke-width="1.3"/>
 <path d="M7.3 4 Q7.3 1.1 10 1.1 Q12.7 1.1 12.7 4" fill="none" stroke="#555" stroke-width="1.2"/>
 <path d="M2.5 4.2 L4.3 18.4 Q4.5 20.2 6.3 20.2 H13.7 Q15.5 20.2 15.7 18.4 L17.5 4.2" fill="#fff" stroke="#555" stroke-width="1.3"/>
 <path d="M7.8 9 V15.5 M12.2 9 V15.5" stroke="#555" stroke-width="1.5"/>
</svg>
<!-- share item -->
<svg width="30" height="30" style="left:704px;top:432px" viewBox="0 0 30 30">
 <path d="M13 7.8 H9.6 Q6.3 7.8 6.3 11.1 V20.2 Q6.3 23.5 9.6 23.5 H19.1 Q22.4 23.5 22.4 20.2 V19.2" fill="none" stroke="#555" stroke-width="1.3"/>
 <path d="M10 17.9 Q11 11.4 18.4 10.1 V6.4 L24.8 12.5 L18.4 18.4 V14.6 Q13.2 14.2 10 17.9 Z" fill="none" stroke="#1a7fd6" stroke-width="1.25" stroke-linejoin="round"/>
</svg>
<!-- star -->
<svg width="21" height="20" style="left:709px;top:477px" viewBox="0 0 21 20">
 <path d="M10.3 1.2 L12.9 6.9 L19.2 7.4 L14.4 11.6 L15.9 17.9 L10.3 14.6 L4.7 17.9 L6.2 11.6 L1.4 7.4 L7.7 6.9Z" fill="none" stroke="#1a7fd6" stroke-width="1.3" stroke-linejoin="round"/>
</svg>
<!-- compress -->
<svg width="30" height="30" style="left:704px;top:512px" viewBox="0 0 30 30">
 <path d="M5.3 9.5 V19.6 Q5.3 23.4 9.1 23.4 H20.9 Q24.7 23.4 24.7 19.6 V12.8 Q24.7 9 20.9 9 H15 L13.6 7.5 Q12.3 6.2 10.4 6.2 H8.6 Q5.3 6.2 5.3 9.5 Z M5.3 10.3 H11.2 Q13.6 10.3 14.9 9" fill="none" stroke="#555" stroke-width="1.3" stroke-linejoin="round"/>
 <path d="M19.4 12.6 V23.6 M18 15.6 H19.4 M19.4 18 H20.7 M18 20.4 H19.4" stroke="#1a7fd6" stroke-width="1.3" fill="none"/>
 <ellipse cx="19.4" cy="10.9" rx="1.2" ry="1.8" fill="none" stroke="#1a7fd6" stroke-width="1.3"/>
</svg>
<!-- copy as path -->
<svg width="21" height="17" style="left:709px;top:559px" viewBox="0 0 21 17">
 <rect x="0.9" y="0.9" width="18.6" height="14.4" rx="2.8" fill="none" stroke="#555" stroke-width="1.35"/>
 <path d="M3 3.3 L5.6 12.6 M6.6 3.3 L9.3 12.6" stroke="#1a7fd6" stroke-width="1.25"/>
 <rect x="11.6" y="11" width="1.6" height="1.6" fill="#1a7fd6"/><rect x="14.9" y="11" width="1.6" height="1.6" fill="#1a7fd6"/>
</svg>
<!-- wrench -->
<svg width="30" height="30" style="left:704px;top:592px" viewBox="0 0 30 30">
 <path d="M21.6 6.1 Q18 4.6 15.2 6.6 Q12.5 8.9 13.1 12.9 L6.2 19.8 Q4.8 21.4 5.8 23 Q7.3 24.8 9.4 23.6 L17 16.2 Q20.6 17 23 14.6 Q25.3 12 24 8.3 L20.2 11.7 L17.6 9.8 Z" fill="none" stroke="#555" stroke-width="1.3" stroke-linejoin="round"/>
</svg>
<!-- show more -->
<svg width="20" height="20" style="left:709px;top:648px" viewBox="0 0 20 20">
 <path d="M7.8 1.8 H5.2 Q1.6 1.8 1.6 5.4 V14.8 Q1.6 18.3 5.2 18.3 H14.8 Q18.4 18.3 18.4 14.8 V11.6 M1.6 10.3 H6.2 Q9.6 10.3 9.6 13.7 V18.3" fill="none" stroke="#555" stroke-width="1.3" stroke-linejoin="round"/>
 <path d="M11.4 8.4 L18.3 1.7 M11.6 1.7 H18.4 V8.2" fill="none" stroke="#1a7fd6" stroke-width="1.4" stroke-linecap="butt" stroke-linejoin="miter"/>
</svg>

<div class="t cm" style="left:743px;top:440px">Share</div>
<div class="t cm" style="left:743px;top:480px">Add to Favorites</div>
<div class="t cm" style="left:743px;top:520px;transform:scaleX(0.985)">Compress to ZIP file</div>
<div class="t cm" style="left:743px;top:560px">Copy as path</div>
<div class="t cm" style="left:743px;top:600px">Properties</div>
<div class="t cm" style="left:743px;top:651px;transform:scaleX(1.01)">Show more options</div>
<div class="t" style="left:943px;top:560px;font-size:15.5px;color:#6b6b6b;transform:scaleX(0.97)">Ctrl+Shift+C</div>
<div class="t" style="left:943px;top:600px;font-size:15.5px;color:#6b6b6b;transform:scaleX(0.97)">Alt+Enter</div>

<!-- ============ TOOLTIP ============ -->
<div class="a" style="left:876px;top:323px;width:122px;height:39px;background:#f9f9f9;border:1px solid #e3e3e3;border-radius:5px;box-shadow:0 2px 6px rgba(0,0,0,0.08)"></div>
<div class="t" style="left:887px;top:335px;font-size:15px;color:#1b1b1b;transform:scaleX(0.975)">Delete (Delete)</div>

<!-- ============ RED ARROW ============ -->
<svg width="1170" height="882" style="left:0;top:0"><line x1="1060.5" y1="321.5" x2="966" y2="371" stroke="#e8202a" stroke-width="4.8" stroke-linecap="round"/><path d="M946.4 383.6 L963.7 363.2 L973.9 380.6 Z" fill="#e8202a" stroke="#e8202a" stroke-width="1" stroke-linejoin="round"/></svg>

<!-- window border -->
<div class="a" style="left:0;top:0;width:1170px;height:882px;border-left:2px solid #7c7c7c;border-top:1px solid #7c7c7c;border-right:1px solid #7c7c7c;border-bottom:1px solid #7c7c7c"></div>
</body></html>
